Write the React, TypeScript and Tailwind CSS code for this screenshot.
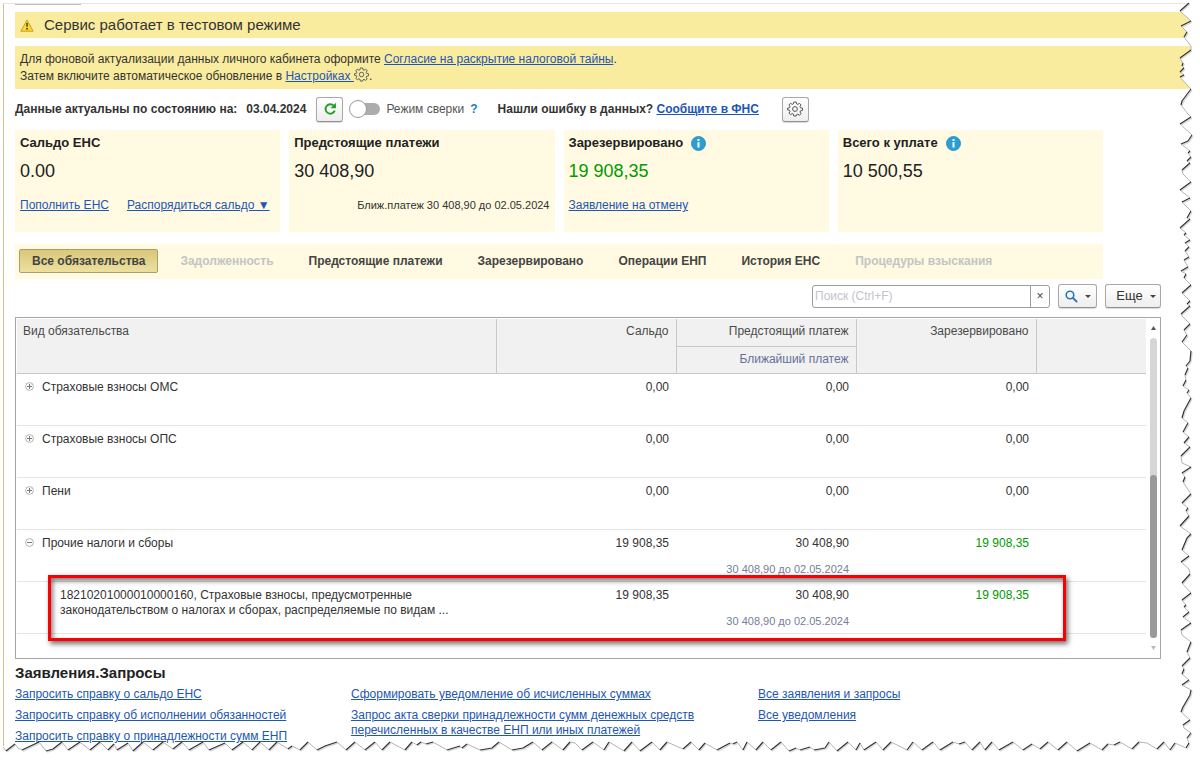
import React from "react";

type Point = [number, number];

const rightTear: Point[] = [
  [1189, 3], [1180, 11], [1191, 21], [1181, 26], [1187, 32], [1184, 37], [1191, 46], [1191, 50], [1180, 58],
  [1183, 63], [1182, 66], [1184, 68], [1180, 72], [1184, 75], [1180, 77], [1188, 86], [1191, 89], [1182, 101],
  [1181, 105], [1188, 114], [1191, 117], [1180, 124], [1192, 135], [1188, 141], [1181, 144], [1190, 151], [1188, 153],
  [1191, 157], [1187, 161], [1190, 163], [1182, 170], [1183, 174], [1191, 182], [1180, 190], [1190, 198], [1182, 202],
  [1191, 211], [1187, 218], [1190, 219], [1180, 228], [1186, 233], [1184, 235], [1190, 240], [1185, 243], [1189, 247],
  [1185, 251], [1189, 257], [1184, 260], [1188, 267], [1181, 271], [1186, 274], [1184, 278], [1191, 285], [1182, 293],
  [1190, 301], [1187, 304], [1190, 306], [1181, 314], [1183, 317], [1190, 324], [1184, 330], [1187, 335], [1182, 342],
  [1191, 351], [1190, 361], [1186, 366], [1188, 368], [1185, 375], [1186, 380], [1183, 386], [1189, 390], [1187, 393],
  [1191, 398], [1184, 411], [1182, 418], [1188, 423], [1183, 432], [1189, 437], [1184, 443], [1190, 447], [1181, 456],
  [1182, 463], [1191, 467], [1182, 473], [1185, 477], [1183, 482], [1191, 494], [1182, 503], [1188, 508], [1186, 511],
  [1189, 516], [1180, 526], [1191, 534], [1187, 538], [1182, 550], [1189, 556], [1181, 562], [1189, 569], [1190, 574],
  [1182, 583], [1191, 593], [1182, 600], [1186, 605], [1184, 607], [1189, 612], [1183, 617], [1191, 623], [1181, 630],
  [1182, 635], [1191, 642], [1187, 652], [1190, 658], [1182, 666], [1184, 669], [1182, 674], [1189, 680], [1182, 685],
  [1191, 690], [1190, 695], [1183, 707], [1181, 712], [1190, 720], [1183, 725], [1184, 728], [1191, 733], [1187, 738],
  [1189, 743], [1186, 748],
];

const bottomTear: Point[] = [
  [3, 747], [6, 751], [15, 744], [18, 748], [22, 750], [39, 742], [46, 751], [53, 749], [62, 742], [68, 750], [80, 742],
  [90, 750], [100, 742], [108, 750], [114, 744], [117, 750], [128, 743], [133, 751], [143, 742], [153, 750], [163, 742],
  [173, 749], [182, 742], [189, 750], [203, 742], [209, 750], [225, 743], [232, 750], [243, 742], [252, 750], [260, 742],
  [269, 750], [277, 742], [288, 749], [292, 746], [300, 750], [308, 742], [317, 750], [325, 746], [337, 742], [346, 750],
  [355, 742], [365, 750], [375, 742], [382, 750], [390, 742], [405, 750], [412, 742], [417, 745], [421, 742], [426, 744],
  [433, 742], [447, 750], [460, 746], [462, 748], [467, 744], [480, 750], [492, 748], [499, 742], [512, 750], [523, 748],
  [533, 742], [542, 750], [552, 742], [563, 750], [570, 742], [575, 743], [582, 750], [593, 742], [604, 750], [609, 742],
  [624, 751], [632, 742], [640, 751], [652, 742], [660, 750], [667, 742], [683, 749], [691, 742], [699, 750], [705, 743],
  [717, 750], [730, 743], [733, 744], [737, 742], [743, 750], [747, 742], [756, 750], [763, 742], [771, 750], [781, 742],
  [789, 751], [796, 748], [800, 750], [810, 747], [814, 750], [825, 748], [829, 742], [837, 751], [848, 742], [856, 750],
  [860, 743], [864, 750], [876, 742], [883, 750], [891, 742], [907, 750], [913, 742], [922, 750], [933, 742], [940, 750],
  [953, 742], [959, 744], [965, 742], [972, 750], [980, 742], [985, 750], [992, 742], [999, 750], [1013, 742],
  [1023, 750], [1032, 744], [1040, 749], [1048, 742], [1058, 750], [1067, 742], [1077, 751], [1090, 743], [1102, 750],
  [1108, 744], [1114, 745], [1120, 742], [1132, 749], [1139, 742], [1147, 743], [1157, 749], [1164, 742], [1170, 750],
  [1175, 743], [1186, 748],
];

// Strokes leaning like "/" are inked dark, the others stay faint.
function tearPaths(points: Point[]) {
  let dark = "";
  let faint = "";
  for (let i = 1; i < points.length; i++) {
    const [x1, y1] = points[i - 1];
    const [x2, y2] = points[i];
    const segment = `M${x1} ${y1}L${x2} ${y2}`;
    if ((x2 - x1) * (y2 - y1) < 0) dark += segment;
    else faint += segment;
  }
  return { dark, faint };
}

function TearStrokes({ points }: { points: Point[] }) {
  const { dark, faint } = tearPaths(points);
  return (
    <>
      <path d={faint} stroke="#b4b4b4" strokeWidth="1" fill="none" />
      <path d={dark} stroke="#d8d8d8" strokeWidth="1.5" fill="none" transform="translate(1 1)" />
      <path d={dark} stroke="#333" strokeWidth="1.2" fill="none" />
    </>
  );
}

function TornEdges() {
  const rightFill = "M" + rightTear.map((p) => p.join(" ")).join("L") + "L1200 760L1200 0L1189 0Z";
  const bottomFill = "M" + bottomTear.map((p) => p.join(" ")).join("L") + "L1186 760L0 760L0 747Z";
  return (
    <>
      <svg className="pointer-events-none absolute top-0 right-0" width="24" height="760" viewBox="1176 0 24 760" aria-hidden="true">
        <path d={rightFill} fill="#fff" />
        <TearStrokes points={rightTear} />
      </svg>
      <svg className="pointer-events-none absolute top-[738px] left-0 w-full" height="22" viewBox="0 738 1200 22" preserveAspectRatio="none" aria-hidden="true">
        <path d={bottomFill} fill="#fff" />
        <TearStrokes points={bottomTear} />
      </svg>
    </>
  );
}

function Gear({ size }: { size: number }) {
  return (
    <svg className="inline-block" width={size} height={size} viewBox="0 0 16 16" fill="none" stroke="#555" strokeWidth="1" strokeLinejoin="round" aria-hidden="true">
      <path d="M6.800 1h2.400l.4 1.900 1.200.5 1.700-1.100 1.500 1.600-1 1.700.5 1.200 2 .4v2.200l-2 .4-.5 1.200 1 1.700-1.500 1.600-1.700-1.100-1.200.5L9.200 15H6.800l-.4-1.900-1.200-.5-1.700 1.100L2 12.100l1-1.700-.5-1.200-2-.4V7.200l2-.4L3 5.600 2 3.900l1.500-1.600 1.700 1.100 1.200-.5z" />
      <circle cx="8" cy="8" r="2.400" />
    </svg>
  );
}

function InfoIcon() {
  return (
    <svg width="15" height="15" viewBox="0 0 15 15" aria-hidden="true">
      <circle cx="7.500" cy="7.500" r="7" fill="#2b9fd3" stroke="#1f86b8" strokeWidth="0.800" />
      <rect x="6.500" y="3" width="2" height="2" fill="#fff" />
      <path d="M6.500 6.200h2v5.300h-2z" fill="#fff" />
    </svg>
  );
}

function Caret() {
  return (
    <svg width="6" height="3" viewBox="0 0 6 3" aria-hidden="true">
      <path d="M0 0h6L3 3z" fill="#444" />
    </svg>
  );
}

function Link({ children, className = "" }: { children: React.ReactNode; className?: string }) {
  return (
    <a href="#" className={"text-[#1d56b5] underline underline-offset-1 " + className}>
      {children}
    </a>
  );
}

const buttonLook = "flex items-center justify-center rounded-[3px] border border-[#a9a9a9] border-b-[#8f8f8f] bg-gradient-to-b from-white to-[#eeeeee] shadow-[0_1px_1px_rgba(0,0,0,0.15)]";

function Card({ title, value, info, green, children }: { title: string; value: string; info?: boolean; green?: boolean; children?: React.ReactNode }) {
  return (
    <section className="flex h-[102px] flex-col bg-[#fffae1] px-[5px] pt-1">
      <h2 className="flex h-[18px] items-center gap-2 text-[13px] font-bold text-[#222]">
        {title}
        {info && <InfoIcon />}
      </h2>
      <p className={"mt-2 text-lg leading-[22px] " + (green ? "text-[#009a00]" : "text-[#222]")}>{value}</p>
      <div className="mt-[15px] flex h-4 items-center">{children}</div>
    </section>
  );
}

const tabs = [
  { label: "Все обязательства", state: "active" },
  { label: "Задолженность", state: "disabled" },
  { label: "Предстоящие платежи", state: "normal" },
  { label: "Зарезервировано", state: "normal" },
  { label: "Операции ЕНП", state: "normal" },
  { label: "История ЕНС", state: "normal" },
  { label: "Процедуры взыскания", state: "disabled" },
];

const rows = [
  { name: "Страховые взносы ОМС", balance: "0,00", next: "0,00", reserved: "0,00" },
  { name: "Страховые взносы ОПС", balance: "0,00", next: "0,00", reserved: "0,00" },
  { name: "Пени", balance: "0,00", next: "0,00", reserved: "0,00" },
  { name: "Прочие налоги и сборы", balance: "19 908,35", next: "30 408,90", due: "30 408,90 до 02.05.2024", reserved: "19 908,35", open: true },
  {
    name: "18210201000010000160, Страховые взносы, предусмотренные законодательством о налогах и сборах, распределяемые по видам ...",
    balance: "19 908,35", next: "30 408,90", due: "30 408,90 до 02.05.2024", reserved: "19 908,35", child: true,
  },
];

function Expander({ open }: { open?: boolean }) {
  return (
    <button type="button" aria-label={open ? "Свернуть" : "Развернуть"} className="mt-[2px] block h-[9px] w-[9px] shrink-0">
      <svg width="9" height="9" viewBox="0 0 9 9" fill="none">
        <circle cx="4.500" cy="4.500" r="3.900" stroke="#aaa" strokeWidth="0.900" />
        <path d={open ? "M2 4.500h5" : "M2 4.500h5M4.500 2v5"} stroke="#777" />
      </svg>
    </button>
  );
}

function ObligationsTable() {
  return (
    <div className="relative mt-[9px] flex h-[342px] border border-[#a6a6a6]">
      <div className="min-w-0 flex-1 p-px">
        <table className="w-full table-fixed border-collapse text-[12px] leading-[15px] text-[#333]">
          <colgroup>
            <col />
            <col className="w-[180px]" />
            <col className="w-[180px]" />
            <col className="w-[180px]" />
            <col className="w-[110px]" />
          </colgroup>
          <thead className="bg-[#f1f1f1] align-top text-[#4a4a4a]">
            <tr className="h-[27px]">
              <th rowSpan={2} className="border-r border-b border-[#c8c8c8] px-[6px] pt-[5px] text-left font-normal">Вид обязательства</th>
              <th rowSpan={2} className="border-r border-b border-[#c8c8c8] px-[7px] pt-[5px] text-right font-normal">Сальдо</th>
              <th className="border-r border-b border-[#c8c8c8] px-[7px] pt-[5px] text-right font-normal">Предстоящий платеж</th>
              <th rowSpan={2} className="border-r border-b border-[#c8c8c8] px-[7px] pt-[5px] text-right font-normal">Зарезервировано</th>
              <th rowSpan={2} className="border-b border-[#c8c8c8]" aria-label="Прочее" />
            </tr>
            <tr className="h-[27px]">
              <th className="border-r border-b border-[#c8c8c8] px-[7px] pt-[5px] text-right font-normal text-[#66709a]">Ближайший платеж</th>
            </tr>
          </thead>
          <tbody className="align-top">
            {rows.map((row) => (
              <tr key={row.name} className="h-[52px] border-b border-[#e4e4e4]">
                <td className="pt-[6px]">
                  {row.child ? (
                    <div className="w-[450px] pl-[43px]">{row.name}</div>
                  ) : (
                    <div className="flex gap-2 pl-2">
                      <Expander open={row.open} />
                      <span>{row.name}</span>
                    </div>
                  )}
                </td>
                <td className="px-[7px] pt-[6px] text-right">{row.balance}</td>
                <td className="px-[7px] pt-[6px] text-right">
                  <div>{row.next}</div>
                  {row.due && <div className="mt-[11px] text-[11px] text-[#75809a]">{row.due}</div>}
                </td>
                <td className={"px-[7px] pt-[6px] text-right " + (row.due ? "text-[#009a00]" : "")}>{row.reserved}</td>
                <td />
              </tr>
            ))}
          </tbody>
        </table>
      </div>
      <div className="flex w-[13px] flex-col items-center pt-2 pb-2">
        <svg width="5" height="4" viewBox="0 0 5 4" aria-hidden="true"><path d="M0 4h5L2.500 0z" fill="#555" /></svg>
        <div className="mt-2 flex w-[7px] flex-1 flex-col justify-end rounded-full bg-[#d6d6d6]">
          <div className="h-[163px] rounded-full bg-[#999]" />
        </div>
        <svg className="mt-2" width="5" height="4" viewBox="0 0 5 4" aria-hidden="true"><path d="M0 0h5L2.500 4z" fill="#bbb" /></svg>
      </div>
      <div className="pointer-events-none absolute right-[94px] bottom-[17px] left-8 h-[66px] border-[3px] border-[#fb0000] shadow-[2px_3px_5px_rgba(0,0,0,0.55),inset_2px_3px_5px_rgba(0,0,0,0.5)]" />
    </div>
  );
}

export default function App() {
  return (
    <div className="relative min-h-[760px] overflow-hidden bg-white pt-[3px] pl-[3px] font-['Liberation_Sans',Arial,sans-serif] text-[12px] leading-4 text-[#333]">
      <div className="h-[743px] overflow-hidden border-t border-l border-t-[#e6e6e6] border-l-[#cfc48c] pl-[11px]">
        <div className="h-px w-[66px] bg-[#bdbdbd]" />
        <div className="mt-[7px] flex h-[26px] items-center gap-[10px] bg-[#faec9e] pl-[5px] text-[15px] text-[#333]">
          <svg width="14" height="13" viewBox="0 0 14 13" aria-hidden="true">
            <path d="M7 1 13.200 12.200H.8z" fill="#ffd735" stroke="#c9a01c" strokeLinejoin="round" />
            <path d="M6.300 4h1.500l-.3 4h-.9zM6.300 9h1.500v1.500H6.300z" fill="#222" />
          </svg>
          Сервис работает в тестовом режиме
        </div>
        <div className="mt-2 h-[43px] bg-[#faec9e] px-[5px] pt-[5px] leading-[17px]">
          <p>
            Для фоновой актуализации данных личного кабинета оформите <Link>Согласие на раскрытие налоговой тайны</Link>.
          </p>
          <p className="flex h-[17px] items-center">
            <span className="whitespace-pre">Затем включите автоматическое обновление в </span>
            <Link className="whitespace-pre">{"Настройках "}</Link>
            <span className="-mt-1 flex"><Gear size={15} /></span>.
          </p>
        </div>

        <div className="mt-[7px] flex h-[26px] items-center whitespace-nowrap">
          <span className="font-bold">Данные актуальны по состоянию на:</span>
          <span className="ml-[9px] font-bold">03.04.2024</span>
          <button type="button" aria-label="Обновить" className={buttonLook + " ml-[10px] h-[25px] w-[27px]"}>
            <svg width="14" height="14" viewBox="0 0 13 13" fill="none" aria-hidden="true">
              <path d="M10 3.400A4.400 4.400 0 1 0 10.900 8" stroke="#22a022" strokeWidth="1.800" />
              <path d="M12 .8v5H7z" fill="#22a022" />
            </svg>
          </button>
          <label className="ml-[6px] flex items-center gap-[6px] text-[#555]">
            <span className="relative flex h-[18px] w-[31px] items-center">
              <input type="checkbox" className="peer sr-only" />
              <span className="ml-1 h-3 w-[27px] rounded-full bg-[#acacac]" />
              <span className="absolute left-0 h-[18px] w-[18px] rounded-full border border-[#999] bg-white" />
            </span>
            Режим сверки
          </label>
          <a href="#" className="ml-[6px] font-bold text-[#1b7fc4]">?</a>
          <span className="ml-5 whitespace-pre font-bold">Нашли ошибку в данных? </span>
          <Link className="font-bold">Сообщите в ФНС</Link>
          <button type="button" aria-label="Настройки" className={buttonLook + " ml-[23px] h-[25px] w-[27px]"}>
            <Gear size={16} />
          </button>
        </div>

        <div className="mt-2 mr-[97px] grid grid-cols-4 gap-[9px]">
          <Card title="Сальдо ЕНС" value="0.00">
            <Link>Пополнить ЕНС</Link>
            <Link className="ml-[18px]">Распорядиться сальдо ▼</Link>
          </Card>
          <Card title="Предстоящие платежи" value="30 408,90">
            <span className="ml-auto text-[11px]">Ближ.платеж 30 408,90 до 02.05.2024</span>
          </Card>
          <Card title="Зарезервировано" value="19 908,35" info green>
            <Link>Заявление на отмену</Link>
          </Card>
          <Card title="Всего к уплате" value="10 500,55" info />
        </div>

        <nav className="mt-3 mr-[97px] flex h-[35px] items-start gap-[9px] bg-[#fffae1] pt-[5px] pl-1">
          {tabs.map((tab) => (
            <button
              key={tab.label}
              type="button"
              disabled={tab.state === "disabled"}
              className={
                "h-6 rounded-[2px] border px-3 text-[12px] font-bold whitespace-nowrap " +
                (tab.state === "active"
                  ? "border-[#a79f72] bg-gradient-to-b from-[#d9c878] to-[#ede0a0] text-[#444]"
                  : tab.state === "disabled"
                    ? "border-transparent text-[#c4c4c4]"
                    : "border-transparent text-[#444]")
              }
            >
              {tab.label}
            </button>
          ))}
        </nav>

        <div className="mr-[39px]">
          <div className="mt-[5px] flex h-6 items-center justify-end">
            <div className="flex h-[23px] w-[238px] rounded-[3px] border border-[#9d9d9d]">
              <input type="text" aria-label="Поиск" placeholder="Поиск (Ctrl+F)" className="min-w-0 flex-1 px-[2px] outline-none placeholder:text-[#c3c3cb]" />
              <button type="button" aria-label="Очистить" className="w-[19px] border-l border-[#9d9d9d] text-[12px] leading-4 text-[#444]">×</button>
            </div>
            <button type="button" aria-label="Найти" className={buttonLook + " ml-2 h-6 w-[39px] gap-[7px]"}>
              <svg width="13" height="13" viewBox="0 0 12 12" fill="none" stroke="#2b78b8" aria-hidden="true">
                <circle cx="4.600" cy="4.600" r="3.500" strokeWidth="1.500" />
                <path d="m7.200 7.200 4 4" strokeWidth="1.800" />
              </svg>
              <Caret />
            </button>
            <button type="button" className={buttonLook + " ml-2 h-6 w-14 gap-[7px] pl-[6px] text-[13px]"}>
              Еще <Caret />
            </button>
          </div>

          <ObligationsTable />

          <h2 className="mt-1 text-[15px] leading-5 font-bold text-[#222]">Заявления.Запросы</h2>
          <div className="mt-1 flex leading-[15px]">
            <div className="flex w-[336px] flex-col items-start gap-[6px]">
              <Link>Запросить справку о сальдо ЕНС</Link>
              <Link>Запросить справку об исполнении обязанностей</Link>
              <Link>Запросить справку о принадлежности сумм ЕНП</Link>
            </div>
            <div className="flex w-[407px] flex-col items-start gap-[6px]">
              <Link>Сформировать уведомление об исчисленных суммах</Link>
              <Link className="w-[350px]">Запрос акта сверки принадлежности сумм денежных средств перечисленных в качестве ЕНП или иных платежей</Link>
            </div>
            <div className="flex flex-col items-start gap-[6px]">
              <Link>Все заявления и запросы</Link>
              <Link>Все уведомления</Link>
            </div>
          </div>
        </div>
      </div>
      <TornEdges />
    </div>
  );
}
